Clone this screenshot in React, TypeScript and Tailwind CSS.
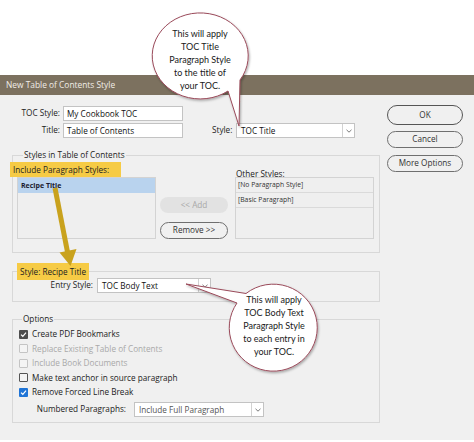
import React from "react";

function Chevron() {
  return (
    <svg width="6" height="4" viewBox="0 0 6 4" className="block">
      <polyline points="0.5,0.8 3,3.2 5.5,0.8" fill="none" stroke="#6b6b6b" strokeWidth="0.9" />
    </svg>
  );
}

function Select({ w, text, dim }: { w: string; text: string; dim?: boolean }) {
  return (
    <div className={`${w} h-[15px] flex bg-white border border-[#c3c3c3]`}>
      <div className={`flex-1 pl-[4px] leading-[13px] ${dim ? "text-[#555]" : "text-[#111]"}`}>{text}</div>
      <div className="w-[12px] border-l border-[#d2d2d2] flex items-center justify-center">
        <Chevron />
      </div>
    </div>
  );
}

function Input({ text }: { text: string }) {
  return (
    <div className="w-[120px] h-[15px] bg-white border border-[#c3c3c3] pl-[3px] leading-[13px] text-[#111]">{text}</div>
  );
}

function Check({ kind }: { kind: "gray" | "blue" | "off" | "disabled" }) {
  if (kind === "gray" || kind === "blue") {
    return (
      <div className={`w-[9px] h-[9px] rounded-[1px] flex items-center justify-center ${kind === "gray" ? "bg-[#4d4d4d]" : "bg-[#1f74d6]"}`}>
        <svg width="7" height="7" viewBox="0 0 7 7">
          <polyline points="1,3.6 2.8,5.3 6,1.6" fill="none" stroke="#fff" strokeWidth="1.2" />
        </svg>
      </div>
    );
  }
  return (
    <div className={`w-[9px] h-[9px] rounded-[1px] border ${kind === "off" ? "border-[#555]" : "border-[#c4c4c4]"} bg-[#f4f4f4]`} />
  );
}

function CheckRow({ kind, label }: { kind: "gray" | "blue" | "off" | "disabled"; label: string }) {
  return (
    <div className="h-[14.5px] flex items-center ml-[6px]">
      <Check kind={kind} />
      <span className={`ml-[4px] ${kind === "disabled" ? "text-[#a9a9a9]" : "text-[#222]"}`}>{label}</span>
    </div>
  );
}

export default function App() {
  return (
    <div className="relative w-[474px] h-[442px] bg-white overflow-hidden font-['Open_Sans',sans-serif] text-[8.2px] text-[#222]">
      <div className="h-[75px]" />
      <div className="h-[20px] bg-[#7c715f] text-[#f1ede7] pl-[6px] flex items-center text-[8.4px]">New Table of Contents Style</div>
      <div className="h-[345px] bg-[#f0f0f0] flex">
        {/* left column */}
        <div className="w-[368px] ml-[12px] pt-[11px]">
          <div className="flex items-center h-[15px]">
            <div className="w-[48px] text-right">TOC Style:</div>
            <div className="ml-[3px]"><Input text="My Cookbook TOC" /></div>
          </div>
          <div className="flex items-center h-[15px] mt-[2px]">
            <div className="w-[48px] text-right">Title:</div>
            <div className="ml-[3px]"><Input text="Table of Contents" /></div>
            <div className="ml-[29px] w-[21px]">Style:</div>
            <div className="ml-[3px]"><Select w="w-[119px]" text="TOC Title" /></div>
          </div>

          <fieldset className="mt-[11px] border border-[#d8d8d8] pb-[13px]">
            <legend className="ml-[10px] px-[1px] leading-[12px]">Styles in Table of Contents</legend>
            <div className="flex items-end mt-[1px]">
              <div className="-ml-[3px] w-[111px] h-[15px] bg-[#f6cb45] pl-[3px] leading-[15px] text-[#222]">Include Paragraph Styles:</div>
              <div className="ml-[115px] leading-[12px] mb-[-3px]">Other Styles:</div>
            </div>
            <div className="flex">
              <div className="ml-[4px] w-[139px] h-[62px] border border-[#d3d3d3] bg-[#efefef]">
                <div className="h-[15px] bg-[#b9d3ee] pl-[3px] leading-[15px] font-bold text-[7px] text-[#1b1b2e]">Recipe Title</div>
              </div>
              <div className="ml-[4px] w-[68px] pt-[20px]">
                <div className="h-[16px] rounded-full bg-[#e2e2e2] text-[#a8a8a8] flex items-center justify-center">&lt;&lt; Add</div>
                <div className="mt-[9px] h-[17px] rounded-full border border-[#6f6f6f] text-[#333] flex items-center justify-center">Remove &gt;&gt;</div>
              </div>
              <div className="ml-[7px] w-[139px] h-[62px] border border-[#d3d3d3] bg-[#efefef] text-[6.8px] text-[#333]">
                <div className="h-[15px] border-b border-[#dadada] pl-[2px] leading-[14px]">[No Paragraph Style]</div>
                <div className="h-[15px] border-b border-[#dadada] pl-[2px] leading-[14px]">[Basic Paragraph]</div>
              </div>
            </div>
          </fieldset>

          <fieldset className="mt-[10px] border border-[#d8d8d8] pb-[8px]">
            <legend className="ml-[4px] px-[3px] h-[17px] leading-[17px] bg-[#f6cb45] text-[#222]">Style: Recipe Title</legend>
            <div className="flex items-center -mt-[2px]">
              <div className="w-[80px] text-right">Entry Style:</div>
              <div className="ml-[4px]"><Select w="w-[114px]" text="TOC Body Text" /></div>
            </div>
          </fieldset>

          <fieldset className="mt-[11px] border border-[#d8d8d8] pb-[5px]">
            <legend className="ml-[9px] px-[1px] leading-[12px]">Options</legend>
            <div className="mt-[2px]">
              <CheckRow kind="gray" label="Create PDF Bookmarks" />
              <CheckRow kind="disabled" label="Replace Existing Table of Contents" />
              <CheckRow kind="disabled" label="Include Book Documents" />
              <CheckRow kind="off" label="Make text anchor in source paragraph" />
              <CheckRow kind="blue" label="Remove Forced Line Break" />
            </div>
            <div className="flex items-center mt-[2.5px]">
              <div className="w-[113px] text-right">Numbered Paragraphs:</div>
              <div className="ml-[8px]"><Select w="w-[130px]" text="Include Full Paragraph" dim /></div>
            </div>
          </fieldset>
        </div>

        {/* right column */}
        <div className="ml-[7px] w-[76px] pt-[10px]">
          <div className="h-[20px] rounded-full border-[1.5px] border-[#555] flex items-center justify-center text-[#333]">OK</div>
          <div className="mt-[6px] h-[17px] rounded-full border border-[#6f6f6f] flex items-center justify-center text-[#333]">Cancel</div>
          <div className="mt-[7px] h-[17px] rounded-full border border-[#6f6f6f] flex items-center justify-center text-[#333]">More Options</div>
        </div>
      </div>

      {/* overlay drawings */}
      <svg className="absolute left-0 top-0 pointer-events-none" width="474" height="442" viewBox="0 0 474 442">
        <defs>
          <filter id="sh" x="-20%" y="-20%" width="140%" height="140%">
            <feDropShadow dx="1" dy="1.5" stdDeviation="1.2" floodColor="#000" floodOpacity="0.3" />
          </filter>
        </defs>
        <line x1="55" y1="188" x2="67.5" y2="252" stroke="#c9a21d" strokeWidth="5" />
        <polygon points="59.5,252.5 76.5,249 70.5,266" fill="#c9a21d" />
        <path d="M 240 80 A 48 43 0 1 0 228 91 L 239 126 Z" fill="#fff" stroke="#9a4a5a" strokeWidth="1" filter="url(#sh)" />
        <path d="M 246 293.5 A 44 43.5 0 1 1 237 303 L 186 284 Z" fill="#fff" stroke="#9a4a5a" strokeWidth="1" filter="url(#sh)" />
      </svg>
      <div className="absolute left-[152px] top-[27px] w-[96px] text-center font-['Lato',sans-serif] text-[9px] leading-[13px] text-[#1a1a1a]">
        This will apply<br />TOC Title<br />Paragraph Style<br />to the title of<br />your TOC.
      </div>
      <div className="absolute left-[230px] top-[293px] w-[88px] text-center font-['Lato',sans-serif] text-[9px] leading-[13px] text-[#1a1a1a]">
        This will apply<br />TOC Body Text<br />Paragraph Style<br />to each entry in<br />your TOC.
      </div>
    </div>
  );
}
